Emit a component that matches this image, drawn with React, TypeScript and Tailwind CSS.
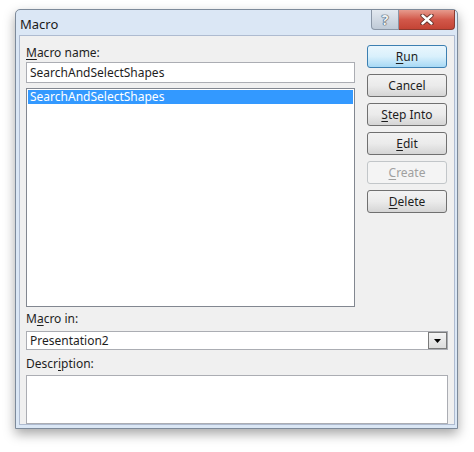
import React from 'react';

const font = { fontFamily: '"Noto Sans", "Open Sans", sans-serif' };

function Btn({ children, main, disabled }: { children: React.ReactNode; main?: boolean; disabled?: boolean }) {
  let cls = 'border-[#707070] bg-gradient-to-b from-[#f2f2f2] via-[#ebebeb] to-[#d5d5d5] text-[#1e1e1e]';
  if (main) cls = 'border-[#3c7fb1] bg-gradient-to-b from-[#eaf6fd] via-[#d9f0fc] to-[#a7d9f5] text-[#1e1e1e]';
  if (disabled) cls = 'border-[#c2c6c9] bg-[#f4f4f4] text-[#a0a0a0]';
  return (
    <div className={`flex h-[23px] w-[80px] items-center justify-center rounded-[3px] border text-[12px] leading-none ${cls}`}>
      {children}
    </div>
  );
}

export default function App() {
  return (
    <div className="h-[452px] w-[474px] bg-white pl-[15px] pt-[9px]" style={font}>
      <div className="flex h-[420px] w-[443px] flex-col rounded-t-[5px] border border-[#7d8a9a] bg-[#dbe7f5] pb-[3px] pl-[3px] pr-[2px] shadow-[0_5px_12px_rgba(0,0,0,0.35)]">
        {/* title bar */}
        <div className="flex h-[25px] items-start justify-between">
          <div className="pl-[1px] pt-[5px] text-[13px] text-[#1a1a1a]">Macro</div>
          <div className="flex h-[20px]">
            <div className="flex w-[28px] items-center justify-center rounded-bl-[4px] border border-t-0 border-[#8a96a6] bg-gradient-to-b from-[#e3e9f0] to-[#bfcad7] text-[14px] font-bold text-[#eef2f6] [text-shadow:0_0_1px_#3b4654,0_0_1px_#3b4654,0_0_1px_#3b4654]">
              ?
            </div>
            <div className="flex w-[56px] items-center justify-center rounded-br-[4px] border border-l-0 border-t-0 border-[#8c3a30] bg-gradient-to-b from-[#e69a8d] via-[#d2584a] to-[#c44435]">
              <svg width="14" height="11" viewBox="0 0 14 11">
                <path d="M2.5 1.5 L11.5 9.5 M11.5 1.5 L2.5 9.5" stroke="#5a2a24" strokeWidth="4.2" strokeLinecap="round" />
                <path d="M2.5 1.5 L11.5 9.5 M11.5 1.5 L2.5 9.5" stroke="#ffffff" strokeWidth="2.4" strokeLinecap="round" />
              </svg>
            </div>
          </div>
        </div>
        {/* content */}
        <div className="flex h-[390px] flex-col border border-[#aebbd0] bg-[#f0f0f0] pl-[6px] text-[12px] text-[#1e1e1e]">
          <div className="flex">
            <div className="flex w-[329px] flex-col">
              <div className="mt-[8px] h-[17px] leading-[17px]">
                <span className="underline underline-offset-2">M</span>acro name:
              </div>
              <div className="mt-[1px] flex h-[21px] items-center border border-[#abadb3] bg-white pl-[3px]">
                SearchAndSelectShapes
              </div>
              <div className="mt-[5px] h-[219px] border border-[#828790] bg-white p-[1px]">
                <div className="flex h-[14px] items-center bg-[#3399ff] pl-[2px] text-white">SearchAndSelectShapes</div>
              </div>
            </div>
            <div className="ml-[12px] mt-[9px] flex flex-col gap-[6px]">
              <Btn main>
                <span>
                  <span className="underline underline-offset-2">R</span>un
                </span>
              </Btn>
              <Btn>Cancel</Btn>
              <Btn>
                <span>
                  <span className="underline underline-offset-2">S</span>tep Into
                </span>
              </Btn>
              <Btn>
                <span>
                  <span className="underline underline-offset-2">E</span>dit
                </span>
              </Btn>
              <Btn disabled>
                <span>
                  <span className="underline underline-offset-2">C</span>reate
                </span>
              </Btn>
              <Btn>
                <span>
                  <span className="underline underline-offset-2">D</span>elete
                </span>
              </Btn>
            </div>
          </div>
          <div className="flex w-[422px] flex-col">
            <div className="mt-[3px] h-[17px] leading-[17px]">
              M<span className="underline underline-offset-2">a</span>cro in:
            </div>
            <div className="mt-[4px] flex h-[19px] items-center justify-between border border-[#abadb3] bg-white pl-[3px]">
              <span>Presentation2</span>
              <div className="flex h-[17px] w-[19px] items-center justify-center border border-[#7a7a7a] bg-gradient-to-b from-[#f4f4f4] to-[#dcdcdc]">
                <svg width="7" height="4" viewBox="0 0 7 4">
                  <path d="M0 0 L7 0 L3.5 4 Z" fill="#000" />
                </svg>
              </div>
            </div>
            <div className="mt-[5px] h-[17px] leading-[17px]">
              Descr<span className="underline underline-offset-2">i</span>ption:
            </div>
            <div className="mt-[3px] h-[49px] border border-[#abadb3] bg-white" />
          </div>
        </div>
      </div>
    </div>
  );
}
